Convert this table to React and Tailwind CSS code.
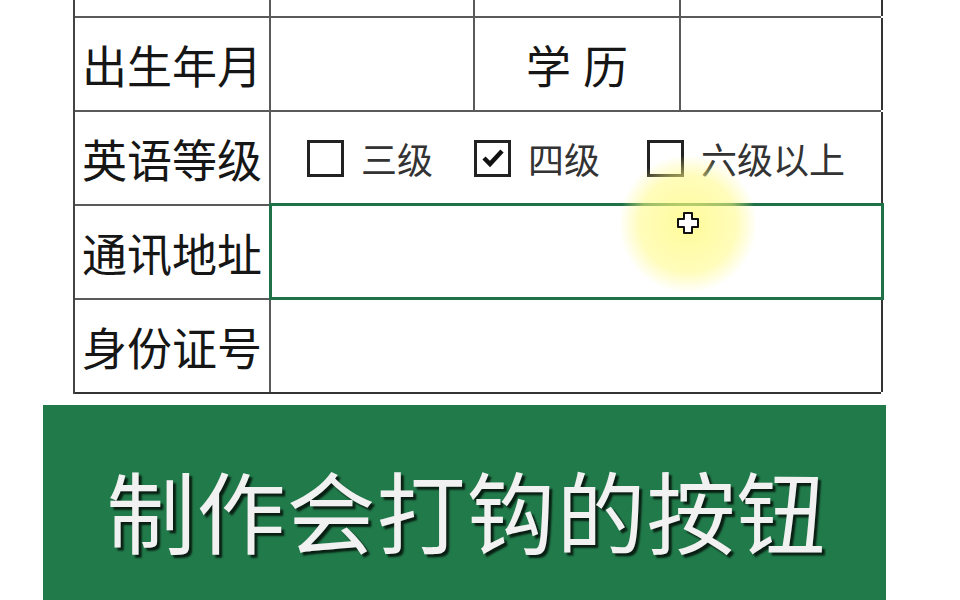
import React from "react";

const font = { fontFamily: '"Noto Sans CJK SC", "Noto Sans", sans-serif' };

function Box({ checked }) {
  return (
    <span className="w-[37px] h-[37px] border-[3px] border-[#222] bg-white flex items-center justify-center">
      {checked && (
        <svg width="26" height="26" viewBox="0 0 26 26">
          <path d="M4 13 L10 19 L22 6" fill="none" stroke="#111" strokeWidth="4.5" strokeLinejoin="miter" />
        </svg>
      )}
    </span>
  );
}

function Option({ checked, label, className = "" }) {
  return (
    <div className={`flex items-center gap-[17px] ${className}`}>
      <Box checked={checked} />
      <span className="text-[36px] leading-none text-[#333]">{label}</span>
    </div>
  );
}

export default function App() {
  const cell = "border-r-2 border-[#5a5a5a]";
  const label = "flex items-center justify-center text-[45px] leading-none text-[#161616]";
  return (
    <div className="w-[960px] h-[600px] bg-white relative overflow-hidden" style={font}>
      <div className="ml-[73px] w-[808px] border-l-2 border-[#444]">
        {/* partial top row */}
        <div className="grid grid-cols-[196px_204px_206px_202px] h-[18px] border-b-2 border-[#5a5a5a]">
          <div className={cell} />
          <div className={cell} />
          <div className={cell} />
          <div className="border-r-2 border-[#333]" />
        </div>

        <div className="grid grid-cols-[196px_204px_206px_202px] h-[94px] border-b-2 border-[#5a5a5a]">
          <div className={`${cell} ${label}`}>出生年月</div>
          <div className={cell} />
          <div className={`${cell} ${label} gap-[12px]`}>
            <span>学</span>
            <span>历</span>
          </div>
          <div className="border-r-2 border-[#333]" />
        </div>

        <div className="grid grid-cols-[196px_612px] h-[94px] border-b-2 border-[#5a5a5a]">
          <div className={`${cell} ${label}`}>英语等级</div>
          <div className="border-r-2 border-[#333] flex items-center pl-[36px]">
            <Option label="三级" />
            <Option checked label="四级" className="ml-[41px]" />
            <Option label="六级以上" className="ml-[47px]" />
          </div>
        </div>

        <div className="grid grid-cols-[196px_612px] h-[94px] border-b-2 border-[#5a5a5a]">
          <div className={`${cell} ${label}`}>通讯地址</div>
          <div className="relative border-r-2 border-[#333]">
            <div className="absolute left-[-2px] right-[-3px] top-[-3px] bottom-[-2px] border-[3px] border-[#1f7148]" />
          </div>
        </div>

        <div className="grid grid-cols-[196px_612px] h-[94px] border-b-2 border-[#333]">
          <div className={`${cell} ${label}`}>身份证号</div>
          <div className="border-r-2 border-[#333]" />
        </div>
      </div>

      <div className="mt-[11px] ml-[43px] w-[843px] h-[195px] bg-[#217a4a] flex items-center justify-center">
        <span
          className="text-[89px] leading-none text-[#f1f1f1] tracking-[1px] pt-[12px] pl-[4px]"
          style={{ textShadow: "3px 3px 2px rgba(0,0,0,0.75)" }}
        >
          制作会打钩的按钮
        </span>
      </div>

      {/* click highlight + cursor */}
      <div className="absolute left-[620px] top-[156px] w-[136px] h-[136px] rounded-full bg-[radial-gradient(circle,rgba(255,250,120,0.75)_0%,rgba(255,250,130,0.55)_50%,rgba(255,255,160,0)_72%)]" />
      <svg className="absolute left-[676px] top-[211px]" width="24" height="24" viewBox="0 0 24 24">
        <path
          d="M8 2 H16 V8 H22 V16 H16 V22 H8 V16 H2 V8 H8 Z"
          fill="#fff"
          stroke="#111"
          strokeWidth="2"
          strokeLinejoin="round"
        />
      </svg>
    </div>
  );
}
